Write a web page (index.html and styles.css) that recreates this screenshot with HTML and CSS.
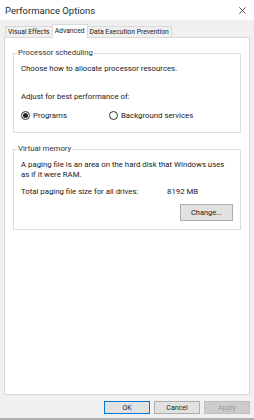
FILE: index.html
```html
<!DOCTYPE html>
<html lang="en">
<head>
    <meta charset="UTF-8">
    <title>Performance Options</title>
    <link rel="stylesheet" href="styles.css">
</head>
<body>
    <div class="dialog">
        <div class="titlebar">
            <span class="title">Performance Options</span>
            <svg class="close" width="7" height="7" viewBox="0 0 7 7">
                <path d="M0.3 0.3 L6.7 6.7 M6.7 0.3 L0.3 6.7" stroke="#333" stroke-width="0.8" fill="none"/>
            </svg>
        </div>

        <div class="tabs">
            <span class="tab">Visual Effects</span>
            <span class="tab active">Advanced</span>
            <span class="tab">Data Execution Prevention</span>
        </div>

        <div class="panel">
            <fieldset class="group">
                <legend>Processor scheduling</legend>
                <p class="line">Choose how to allocate processor resources.</p>
                <p class="line spaced">Adjust for best performance of:</p>
                <div class="radios">
                    <label class="radio"><span class="dot checked"></span>Programs</label>
                    <label class="radio"><span class="dot"></span>Background services</label>
                </div>
            </fieldset>

            <fieldset class="group">
                <legend>Virtual memory</legend>
                <p class="line">A paging file is an area on the hard disk that Windows uses as if it were RAM.</p>
                <div class="size-row">
                    <span class="size-label">Total paging file size for all drives:</span>
                    <span>8192 MB</span>
                </div>
                <div class="change-row">
                    <button class="btn">Change...</button>
                </div>
            </fieldset>
        </div>

        <div class="footer">
            <button class="btn default">OK</button>
            <button class="btn">Cancel</button>
            <button class="btn disabled">Apply</button>
        </div>
    </div>
</body>
</html>
```

FILE: styles.css
```css
/* Ventana de diálogo estilo Windows */
body, html {
    margin: 0;
    height: 100%;
    font-family: Roboto, "Noto Sans", sans-serif;
    font-size: 7.8px;
    color: #1a1a1a;
    background-color: #f0f0f0;
}

.dialog {
    width: 254px;
    height: 420px;
    display: flex;
    flex-direction: column;
    box-sizing: border-box;
    border-bottom: 2px solid #b0b0b0;
}

.titlebar {
    height: 20px;
    background-color: #ffffff;
    display: flex;
    align-items: center;
    justify-content: space-between;
    padding: 0 8px 0 5px;
}

.title {
    font-size: 9.5px;
    color: #2b2b2b;
}

/* Pestañas */
.tabs {
    display: flex;
    align-items: flex-end;
    height: 13px;
    margin-top: 4px;
    padding-left: 5px;
}

.tab {
    height: 10px;
    line-height: 11px;
    padding: 0 2px;
    border: 1px solid #d9d9d9;
    border-bottom: none;
    margin-right: -1px;
    background-color: #f0f0f0;
    font-size: 6.8px;
}

.tab.active {
    height: 13px;
    line-height: 13px;
    background-color: #ffffff;
    position: relative;
    z-index: 1;
    margin-bottom: -1px;
}

/* Panel principal */
.panel {
    height: 358px;
    margin: 0 4px;
    background-color: #ffffff;
    border: 1px solid #d9d9d9;
    box-sizing: border-box;
    padding: 10px 8px 0 8px;
    display: flex;
    flex-direction: column;
    gap: 11px;
}

.group {
    margin: 0;
    border: 1px solid #dcdcdc;
    padding: 6px 7px 12px 7px;
}

.group legend {
    padding: 0 1px;
    margin-left: -4px;
    line-height: 10px;
    color: #333;
}

.line {
    margin: 0;
    line-height: 10px;
}

.line.spaced {
    margin-top: 18px;
}

.radios {
    display: flex;
    margin-top: 8px;
    height: 10px;
}

.radio {
    display: flex;
    align-items: center;
    width: 88px;
}

.dot {
    width: 7px;
    height: 7px;
    border: 1px solid #333;
    border-radius: 50%;
    margin-right: 3px;
    display: flex;
    align-items: center;
    justify-content: center;
}

.dot.checked::after {
    content: "";
    width: 5px;
    height: 5px;
    border-radius: 50%;
    background-color: #222;
}

.size-row {
    display: flex;
    margin-top: 7px;
    line-height: 10px;
}

.size-label {
    width: 146px;
}

.change-row {
    display: flex;
    justify-content: flex-end;
    margin-top: 7px;
    margin-bottom: -4px;
}

/* Botones */
.btn {
    font-family: inherit;
    font-size: 7px;
    height: 13px;
    width: 46px;
    padding: 0;
    border: 1px solid #adadad;
    background-color: #e1e1e1;
    color: #222;
}

.change-row .btn {
    width: 53px;
    height: 17px;
    font-size: 7.4px;
}

.btn.default {
    border-color: #0078d7;
}

.btn.disabled {
    background-color: #cccccc;
    border-color: #bfbfbf;
    color: #9a9a9a;
}

.footer {
    display: flex;
    justify-content: flex-end;
    gap: 4px;
    padding: 6px 4px 0 0;
}
```
